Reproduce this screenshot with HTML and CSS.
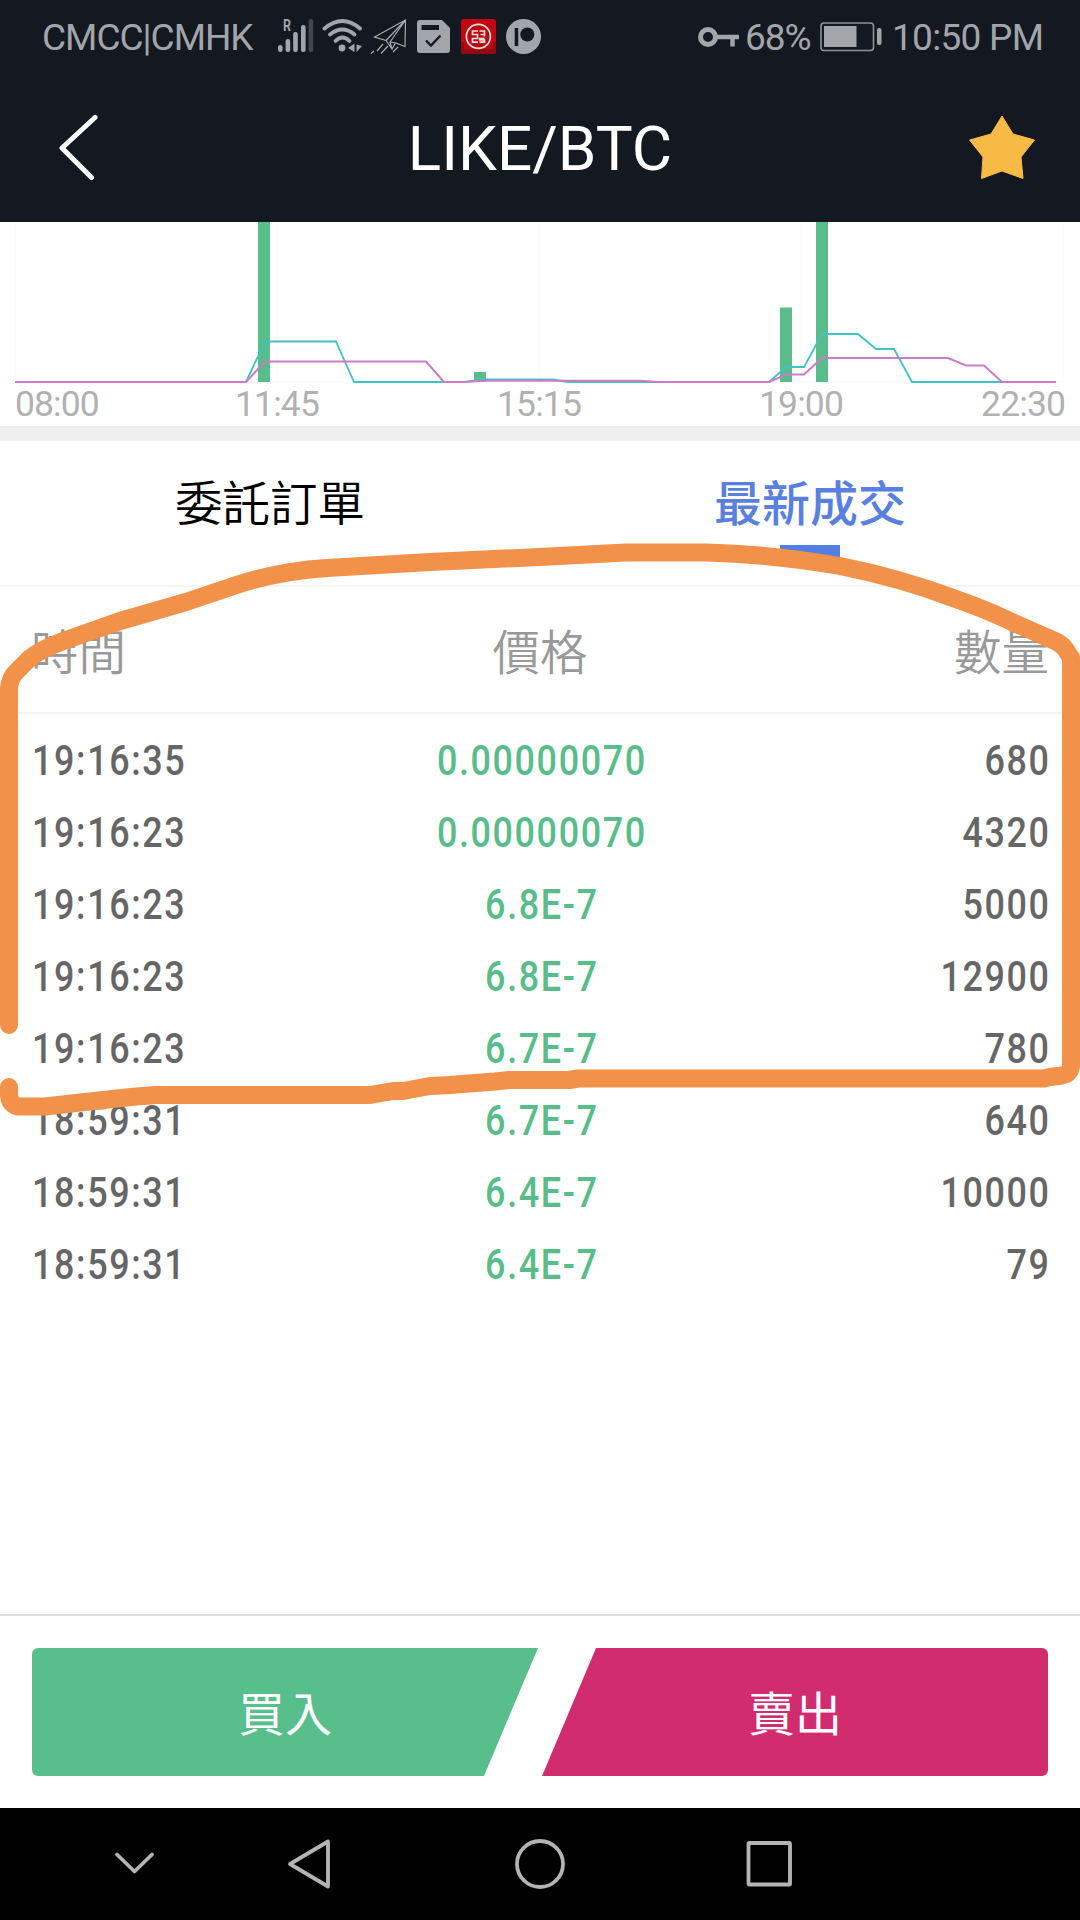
FILE: index.html
```html
<!DOCTYPE html>
<html lang="zh-Hant">
<head>
<meta charset="utf-8">
<title>LIKE/BTC</title>
<link rel="stylesheet" href="styles.css">
</head>
<body>
<div class="screen">
  <header class="top">
    <div class="status">
      <span class="carrier">CMCC|CMHK</span>
      <svg class="status-icons" width="266" height="40" viewBox="277 16 266 40">
        <g fill="#a2a5a9">
          <text class="roaming" x="283" y="31" textLength="8" lengthAdjust="spacingAndGlyphs">R</text>
          <rect x="278" y="45" width="4.6" height="7" rx="2.2"/>
          <rect x="285.6" y="39" width="4.6" height="13" rx="2"/>
          <rect x="293.2" y="32" width="4.6" height="20" rx="2"/>
          <rect x="301" y="25" width="4.6" height="27" rx="2"/>
          <rect x="308.6" y="19" width="4.6" height="33" rx="2" fill="#43474d"/>
        </g>
        <g fill="none" stroke="#a2a5a9" stroke-width="3.800" stroke-linecap="round">
          <path d="M324.500 28.500Q342.500 13.500 360 28.500"/>
          <path d="M330 34.500Q342.500 24.500 354.500 34.500"/>
          <path d="M335.500 41Q342.500 34 349.500 41"/>
        </g>
        <circle cx="342" cy="48" r="3.4" fill="#a2a5a9"/>
        <path d="M348 48L354.500 43.500V52ZM356.500 44.500V52L362 46Z" fill="#a2a5a9"/>
        <path d="M405.500 20L374.500 37L386 40.500L392 49L395.500 43L405 46.500ZM405.500 20L386 40.500M405.500 20L390 42L392 49M390 42L395.500 43M371 53.500L374 51M377 51L383 44M381 53.500L388 46M393 52L398 47" fill="none" stroke="#a9acb0" stroke-width="1.2"/>
        <path d="M420 20H442L450 28V50Q450 53 447 53H420Q417 53 417 50V23Q417 20 420 20Z" fill="#a2a5a9"/>
        <path d="M421.500 25H439V30H421.500Z" fill="#14181f"/>
        <path d="M426 40.500L431 45.500L440.500 35.500" fill="none" stroke="#14181f" stroke-width="2.4"/>
        <rect x="461" y="19" width="35" height="35" rx="3" fill="#c40811"/>
        <path d="M461 42H496V51Q496 54 493 54H464Q461 54 461 51Z" fill="#940a10"/>
        <rect x="464" y="24" width="29" height="25" fill="#b80a12"/>
        <g fill="none" stroke="#f4dcdc">
          <circle cx="478.400" cy="36.400" r="12" stroke-width="1.700"/>
          <path d="M478 31H472.500V34.500H477.500V38.500H472.500V42.200H478M479.500 31H484.500V34.500H480.500M484.500 34.500V36.500M484.500 38.500H479.700V40H484.500V42.200H479.500" stroke-width="1.700"/>
        </g>
        <circle cx="523.500" cy="36.500" r="17.500" fill="#a2a5a9"/>
        <circle cx="527.300" cy="34.500" r="7" fill="#14181f"/>
        <rect x="514.700" y="28" width="3.500" height="18" fill="#14181f"/>
      </svg>
      <svg class="key" width="42" height="22" viewBox="0 0 42 22">
        <g fill="none" stroke="#a2a5a9"><circle cx="10" cy="11" r="7.500" stroke-width="5"/><path d="M19 11H41M34.500 11V20.500" stroke-width="4.500"/></g>
      </svg>
      <span class="battery-level">68%</span>
      <svg class="battery" width="62" height="30" viewBox="0 0 62 30">
        <rect x="1" y="1" width="52.500" height="27.500" rx="3" fill="none" stroke="#8f9296" stroke-width="1.600"/>
        <rect x="4" y="4" width="32.500" height="21" fill="#a2a5a9"/>
        <rect x="57" y="6" width="4.500" height="17" rx="2" fill="#a2a5a9"/>
      </svg>
      <span class="clock">10:50 PM</span>
    </div>
    <div class="titlebar">
      <svg class="back" width="40" height="66" viewBox="0 0 40 66"><path d="M36 3.500L3 34L32.500 63.500" fill="none" stroke="#fff" stroke-width="5" stroke-linecap="round" stroke-linejoin="round"/></svg>
      <h1 class="title">LIKE/BTC</h1>
      <svg class="star" width="68" height="66" viewBox="968 114 68 66"><path d="M1002 116L1013 134L1034.500 140L1021 157L1023 178.500L1002 171L981.500 178.500L983 157L969.500 140L991 134Z" fill="#f7ba45" stroke="#f7ba45" stroke-linejoin="round"/></svg>
    </div>
  </header>

  <section class="chart">
    <svg class="plot" width="1080" height="162" viewBox="0 222 1080 162">
      <path d="M15.500 222V382M277.500 222V382M539.500 222V382M801.500 222V382M1063.500 222V382M15 382H1064" stroke="#fafafa"/>
      <g fill="#58bc8b">
        <rect x="258" y="222" width="12" height="160"/>
        <rect x="474" y="372" width="12" height="10"/>
        <rect x="780" y="307.500" width="12" height="74.500"/>
        <rect x="816" y="222" width="12" height="160"/>
      </g>
      <path d="M15 382H246L265 341.500H336L354 382H465L482 379.500H553L568 382H769L786 367H804L822 334H858L876 349H894L912 382H1056" fill="none" stroke="#42c2c7" stroke-width="1.800"/>
      <path d="M15 382H246L265 361.500H426L444 382H465L482 380.700H640L658 382H769L786 374.500H804L822 358H948L966 365.500H984L1002 382H1056" fill="none" stroke="#cc7cc7" stroke-width="2"/>
    </svg>
    <div class="axis"><span>08:00</span><span>11:45</span><span>15:15</span><span>19:00</span><span>22:30</span></div>
  </section>

  <nav class="tabs">
    <div class="tab">委託訂單</div>
    <div class="tab active">最新成交</div>
  </nav>

  <section class="trades">
    <div class="row head"><span>時間</span><span>價格</span><span>數量</span></div>
    <div class="rows">
      <div class="row"><span>19:16:35</span><span class="price">0.00000070</span><span>680</span></div>
      <div class="row"><span>19:16:23</span><span class="price">0.00000070</span><span>4320</span></div>
      <div class="row"><span>19:16:23</span><span class="price">6.8E-7</span><span>5000</span></div>
      <div class="row"><span>19:16:23</span><span class="price">6.8E-7</span><span>12900</span></div>
      <div class="row"><span>19:16:23</span><span class="price">6.7E-7</span><span>780</span></div>
      <div class="row"><span>18:59:31</span><span class="price">6.7E-7</span><span>640</span></div>
      <div class="row"><span>18:59:31</span><span class="price">6.4E-7</span><span>10000</span></div>
      <div class="row"><span>18:59:31</span><span class="price">6.4E-7</span><span>79</span></div>
    </div>
  </section>

  <footer class="actions">
    <div class="action buy">買入</div>
    <div class="action sell">賣出</div>
  </footer>

  <div class="navbar">
    <svg width="1080" height="112" viewBox="0 1808 1080 112">
      <g fill="none" stroke="#b4b4b4" stroke-width="3.800" stroke-linejoin="round">
        <path d="M117 1854.500L134.500 1871.500L152 1854.500" stroke-linecap="round"/>
        <path d="M328 1841.500V1886.500L290 1864Z"/>
        <circle cx="540" cy="1864" r="23"/>
        <rect x="748.500" y="1843" width="41.500" height="41.500" rx="1"/>
      </g>
    </svg>
  </div>

  <svg class="marker" width="1080" height="1920" viewBox="0 0 1080 1920">
    <path d="M9 1025V688Q10 678 16 672L28 660Q40 649 69 639L120 621L186 602L238 584.500Q280 571 327 568L430 562L540 557L626 552.500H707Q770 554 840 566Q900 578 953 598Q985 609 1012 622L1055 641Q1062 644 1066 650L1071 658V1066Q1070 1074 1062 1075.500L1050 1077L1044 1078.500H578L569 1080H510L495 1081.500L475 1083L450 1085L430 1086L403 1091H393L370 1095H155L131 1097L85 1102L45 1106.500H18Q9 1104 9 1094V1087" fill="none" stroke="#f2914a" stroke-width="18" stroke-linecap="round" stroke-linejoin="round"/>
  </svg>
</div>
</body>
</html>
```
FILE: styles.css
```css
* { box-sizing: border-box; }
body { margin: 0; background: #fff; }
.screen {
  position: relative;
  width: 1080px;
  height: 1920px;
  display: flex;
  flex-direction: column;
  overflow: hidden;
  font-family: Roboto, "Noto Sans CJK TC", sans-serif;
}
.top { height: 222px; background: #141820; }
.status {
  height: 74px;
  display: flex;
  align-items: center;
  padding: 0 36px 0 42px;
  font-size: 37px;
  color: #a2a5a9;
  white-space: nowrap;
}
.carrier { flex: none; width: 235px; letter-spacing: -1px; }
.roaming { font: 700 16px Roboto, sans-serif; }
.status-icons { flex: none; margin-top: -2px; }
.key { flex: none; margin-left: 155px; }
.battery-level { flex: none; margin-left: 5px; width: 75px; letter-spacing: -1.1px; }
.battery { flex: none; width: 62px; }
.clock { flex: none; margin-left: 10px; letter-spacing: -0.7px; }
.titlebar {
  height: 148px;
  display: grid;
  grid-template-columns: 200px 1fr 200px;
  align-items: start;
}
.back { margin: 40px 0 0 59px; }
.title {
  margin: 38px 0 0;
  text-align: center;
  font-size: 62px;
  line-height: 74px;
  font-weight: 400;
  color: #fff;
}
.star { margin: 40px 0 0 88px; }
.chart { height: 219px; border-bottom: 15px solid #efefef; }
.plot { display: block; }
/* Outer labels hug the plot edges, inner ones centre on their gridline. */
.axis {
  display: grid;
  grid-template-columns: 146px 262px 262px 262px 133px;
  font-size: 35.5px;
  line-height: 40px;
  letter-spacing: -0.9px;
  text-align: center;
  color: #b1b1b1;
}
.axis span:first-child { text-align: left; padding-left: 15px; }
.axis span:last-child { text-align: right; }
.tabs { height: 146px; display: flex; border-bottom: 2px solid #f4f4f4; }
.tab {
  flex: 1;
  display: flex;
  flex-direction: column;
  align-items: center;
  padding-top: 29px;
  font-size: 47.5px;
  line-height: 70px;
  font-weight: 350;
  color: #000;
}
.tab.active { font-weight: 500; font-size: 48px; color: #597fdf; }
.tab.active::after {
  content: "";
  width: 60px;
  height: 12px;
  margin-top: 5px;
  background: #557ee4;
}
.row {
  display: grid;
  grid-template-columns: 1fr 1fr 1fr;
  height: 72px;
  padding: 0 29px 0 32px;
  align-items: center;
  font-size: 42px;
  font-weight: 500;
  letter-spacing: 1.9px;
  color: #666;
}
.row span:nth-child(2) { text-align: center; }
.row span:nth-child(3) { text-align: right; }
/* Figures are set condensed, with open tracking. */
.rows span { transform: scaleX(0.855); transform-origin: left; }
.rows span:nth-child(2) { transform-origin: center; }
.rows span:nth-child(3) { transform-origin: right; }
.row.head {
  height: 127px;
  padding: 0 31px;
  border-bottom: 2px solid #f4f4f4;
  font-size: 47.5px;
  font-weight: 350;
  letter-spacing: 0;
  color: #999;
}
.rows { padding-top: 10px; }
.row .price { color: #58bc8b; }
.actions {
  margin-top: auto;
  height: 194px;
  border-top: 2px solid #dfdfdf;
  padding: 32px 32px 0;
  display: flex;
  gap: 4px;
}
.action {
  flex: 1;
  height: 128px;
  text-align: center;
  font-size: 47px;
  line-height: 133px;
  color: #fff;
}
.buy {
  background: #58be8b;
  border-radius: 6px 0 0 6px;
  clip-path: polygon(0 0, 100% 0, 452px 100%, 0 100%);
}
.sell {
  background: #d12c70;
  border-radius: 0 6px 6px 0;
  clip-path: polygon(54px 0, 100% 0, 100% 100%, 0 100%);
}
.navbar { height: 112px; background: #000; }
.navbar svg { display: block; }
.marker { position: absolute; left: 0; top: 0; pointer-events: none; }
```
